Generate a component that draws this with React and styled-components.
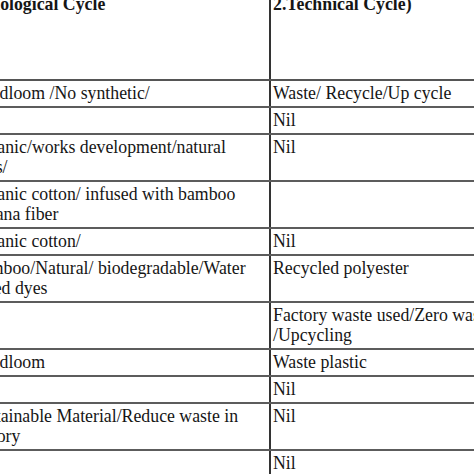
import React from "react";
import styled, { createGlobalStyle } from "styled-components";

const GlobalStyle = createGlobalStyle`
  html, body {
    margin: 0;
    padding: 0;
    background: #fff;
  }
  body {
    font-family: "Liberation Serif", "Times New Roman", serif;
    color: #161616;
  }
`;

const rows = [
  { left: ["Handloom /No synthetic/"], right: ["Waste/ Recycle/Up cycle"] },
  { left: [], right: ["Nil"] },
  { left: ["Organic/works development/natural", "dyes/"], right: ["Nil"] },
  { left: ["Organic cotton/ infused with bamboo", "banana fiber"], right: [] },
  { left: ["Organic cotton/"], right: ["Nil"] },
  { left: ["Bamboo/Natural/ biodegradable/Water", "based dyes"], right: ["Recycled polyester"] },
  { left: [], right: ["Factory waste used/Zero waste", "/Upcycling"], lines: 2 },
  { left: ["Handloom"], right: ["Waste plastic"] },
  { left: [], right: ["Nil"] },
  { left: ["Sustainable Material/Reduce waste in", "factory"], right: ["Nil"] },
  { left: [], right: ["Nil"] },
];

const Frame = styled.div`
  width: 474px;
  height: 474px;
  overflow: hidden;
  background: #fff;
`;

const Table = styled.table`
  border-collapse: collapse;
  margin-left: -32px;
  margin-top: -8px;
  table-layout: fixed;
  width: 560px;
  font-size: 17.8px;
  line-height: 20px;
`;

const Col = styled.col`
  width: ${(p) => p.$w}px;
`;

const HeadCell = styled.th`
  height: ${(p) => p.$h}px;
  padding: 2px 2px 3px;
  text-align: left;
  vertical-align: top;
  font-weight: bold;
  white-space: nowrap;
  border-bottom: 2px solid #555;
  border-left: ${(p) => (p.$divider ? "2px solid #333" : "none")};
`;

const Cell = styled.td`
  height: ${(p) => p.$lines * 20}px;
  padding: 2px 2px 3px;
  vertical-align: top;
  white-space: nowrap;
  border-bottom: 2px solid #5c5c5c;
  border-left: ${(p) => (p.$divider ? "2px solid #333" : "none")};
`;

const Lines = ({ lines }) =>
  lines.map((l, i) => (
    <React.Fragment key={i}>
      {i > 0 && <br />}
      {l}
    </React.Fragment>
  ));

export default function App() {
  return (
    <Frame>
      <GlobalStyle />
      <Table>
        <colgroup>
          <Col $w={302} />
          <Col $w={258} />
        </colgroup>
        <thead>
          <tr>
            <HeadCell $h={82}>1.Biological Cycle</HeadCell>
            <HeadCell $h={82} $divider>
              2.Technical Cycle)
            </HeadCell>
          </tr>
        </thead>
        <tbody>
          {rows.map((r, i) => {
            const n = r.lines || Math.max(r.left.length, r.right.length, 1);
            return (
              <tr key={i}>
                <Cell $lines={n}>
                  <Lines lines={r.left} />
                </Cell>
                <Cell $lines={n} $divider>
                  <Lines lines={r.right} />
                </Cell>
              </tr>
            );
          })}
        </tbody>
      </Table>
    </Frame>
  );
}
